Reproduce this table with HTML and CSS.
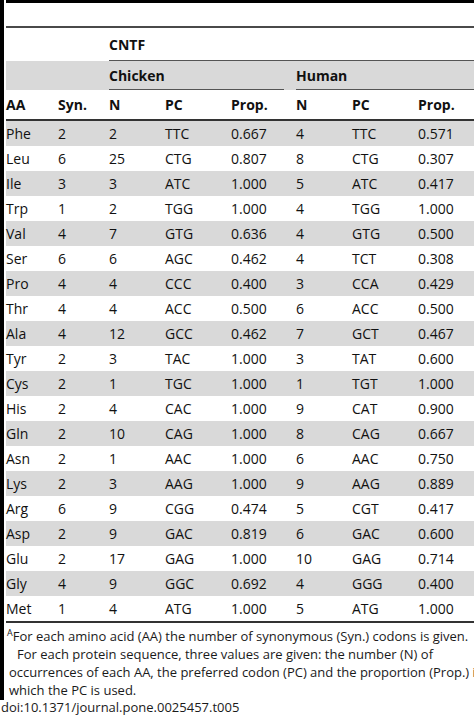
FILE: index.html
```html
<!DOCTYPE html>
<html>
<head>
<meta charset="utf-8">
<link rel="stylesheet" href="styles.css">
</head>
<body>
<div class="frame">
  <div class="topbar"></div>
  <div class="spacer"></div>
  <div class="table">
    <div class="row head-cntf">
      <div class="cntf">CNTF</div>
    </div>
    <div class="row head-species">
      <div class="species chicken">Chicken</div>
      <div class="species human">Human</div>
    </div>
    <div class="row head-cols">
      <div>AA</div><div>Syn.</div><div>N</div><div>PC</div><div>Prop.</div><div>N</div><div>PC</div><div>Prop.</div>
    </div>
    <div class="body">
      <div class="row data"><div>Phe</div><div>2</div><div>2</div><div>TTC</div><div>0.667</div><div>4</div><div>TTC</div><div>0.571</div></div>
      <div class="row data"><div>Leu</div><div>6</div><div>25</div><div>CTG</div><div>0.807</div><div>8</div><div>CTG</div><div>0.307</div></div>
      <div class="row data"><div>Ile</div><div>3</div><div>3</div><div>ATC</div><div>1.000</div><div>5</div><div>ATC</div><div>0.417</div></div>
      <div class="row data"><div>Trp</div><div>1</div><div>2</div><div>TGG</div><div>1.000</div><div>4</div><div>TGG</div><div>1.000</div></div>
      <div class="row data"><div>Val</div><div>4</div><div>7</div><div>GTG</div><div>0.636</div><div>4</div><div>GTG</div><div>0.500</div></div>
      <div class="row data"><div>Ser</div><div>6</div><div>6</div><div>AGC</div><div>0.462</div><div>4</div><div>TCT</div><div>0.308</div></div>
      <div class="row data"><div>Pro</div><div>4</div><div>4</div><div>CCC</div><div>0.400</div><div>3</div><div>CCA</div><div>0.429</div></div>
      <div class="row data"><div>Thr</div><div>4</div><div>4</div><div>ACC</div><div>0.500</div><div>6</div><div>ACC</div><div>0.500</div></div>
      <div class="row data"><div>Ala</div><div>4</div><div>12</div><div>GCC</div><div>0.462</div><div>7</div><div>GCT</div><div>0.467</div></div>
      <div class="row data"><div>Tyr</div><div>2</div><div>3</div><div>TAC</div><div>1.000</div><div>3</div><div>TAT</div><div>0.600</div></div>
      <div class="row data"><div>Cys</div><div>2</div><div>1</div><div>TGC</div><div>1.000</div><div>1</div><div>TGT</div><div>1.000</div></div>
      <div class="row data"><div>His</div><div>2</div><div>4</div><div>CAC</div><div>1.000</div><div>9</div><div>CAT</div><div>0.900</div></div>
      <div class="row data"><div>Gln</div><div>2</div><div>10</div><div>CAG</div><div>1.000</div><div>8</div><div>CAG</div><div>0.667</div></div>
      <div class="row data"><div>Asn</div><div>2</div><div>1</div><div>AAC</div><div>1.000</div><div>6</div><div>AAC</div><div>0.750</div></div>
      <div class="row data"><div>Lys</div><div>2</div><div>3</div><div>AAG</div><div>1.000</div><div>9</div><div>AAG</div><div>0.889</div></div>
      <div class="row data"><div>Arg</div><div>6</div><div>9</div><div>CGG</div><div>0.474</div><div>5</div><div>CGT</div><div>0.417</div></div>
      <div class="row data"><div>Asp</div><div>2</div><div>9</div><div>GAC</div><div>0.819</div><div>6</div><div>GAC</div><div>0.600</div></div>
      <div class="row data"><div>Glu</div><div>2</div><div>17</div><div>GAG</div><div>1.000</div><div>10</div><div>GAG</div><div>0.714</div></div>
      <div class="row data"><div>Gly</div><div>4</div><div>9</div><div>GGC</div><div>0.692</div><div>4</div><div>GGG</div><div>0.400</div></div>
      <div class="row data"><div>Met</div><div>1</div><div>4</div><div>ATG</div><div>1.000</div><div>5</div><div>ATG</div><div>1.000</div></div>
    </div>
  </div>
  <div class="note">
    <div class="note-line"><sup>A</sup>For each amino acid (AA) the number of synonymous (Syn.) codons is given.</div>
    <div class="note-line indent">For each protein sequence, three values are given: the number (N) of</div>
    <div class="note-line">occurrences of each AA, the preferred codon (PC) and the proportion (Prop.) in</div>
    <div class="note-line">which the PC is used.</div>
  </div>
</div>
<div class="doi">doi:10.1371/journal.pone.0025457.t005</div>
</body>
</html>
```

FILE: styles.css
```css
html, body {
  margin: 0;
  padding: 0;
  background: #fff;
}
body {
  font-family: "Open Sans", "DejaVu Sans", sans-serif;
  font-size: 13px;
  color: #151515;
  width: 474px;
  overflow: hidden;
}
.frame {
  border-left: 4px solid #000;
  padding-left: 2px;
  white-space: nowrap;
  overflow: hidden;
}
.topbar {
  height: 3px;
  background: #000;
}
.spacer {
  height: 23px;
  border-bottom: 2px solid #4a4a4a;
}
.table {
  font-size: 14px;
  color: #111;
}
.row {
  display: grid;
  grid-template-columns: 52px 51px 56px 66px 65px 56px 66px 56px;
  align-items: center;
}
.head-cntf {
  height: 33px;
  font-weight: 700;
  align-items: stretch;
}
.cntf {
  grid-column: 3 / 9;
  display: flex;
  align-items: center;
  padding-top: 1px;
  border-bottom: 1px solid #555;
}
.head-species {
  height: 29px;
  background: #d9d9d9;
  font-weight: 700;
  align-items: stretch;
}
.species {
  display: flex;
  align-items: center;
  border-bottom: 1px solid #555;
}
.chicken {
  grid-column: 3 / 6;
  margin-right: 12px;
}
.human {
  grid-column: 6 / 9;
}
.head-cols {
  height: 29px;
  font-weight: 700;
  border-bottom: 2px solid #333;
}
.data {
  height: 25px;
}
.data:nth-child(odd) {
  background: #d9d9d9;
}
.body {
  border-bottom: 2px solid #333;
}
.note {
  padding-top: 4px;
  padding-bottom: 1px;
  line-height: 18px;
  color: #1a1a1a;
}
.note-line {
  padding-left: 3px;
  height: 18px;
}
.note-line.indent {
  padding-left: 11px;
}
.note sup {
  font-size: 9px;
  line-height: 0;
  vertical-align: 5px;
  margin-left: -2px;
}
.doi {
  line-height: 15px;
  padding-left: 1px;
  color: #1a1a1a;
}
```
